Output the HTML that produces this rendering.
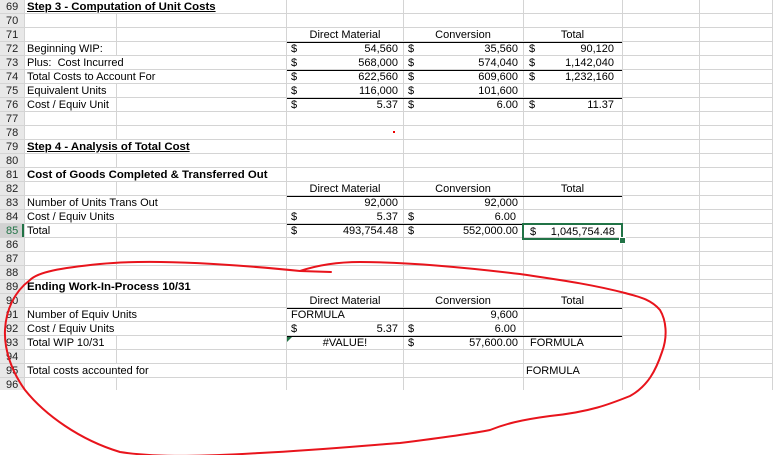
<!DOCTYPE html>
<html><head><meta charset="utf-8"><style>
body{margin:0;width:773px;height:455px;overflow:hidden;background:#fff;font-family:"Liberation Sans",Arial,sans-serif;font-size:11px;color:#000;position:relative}
.t{position:absolute;line-height:14px;white-space:nowrap;height:14px}
.a{background:#fff;height:13px;overflow:visible;padding-right:3px}
.r{text-align:right}
.c{text-align:center}
.b{font-weight:bold;font-size:11.4px}
.u{text-decoration:underline}
.h{position:absolute;left:0;width:24px;height:14px;background:#e8e8e8;line-height:14px;padding-left:6px;box-sizing:border-box;color:#222}
.gl{position:absolute;background:#d4d4d4}
.bl{position:absolute;height:1px;background:#000;left:287px;width:335px}
</style></head><body>
<div id="g"></div>
<script>
var s='';
for(var n=69;n<=96;n++){var y=(n-69)*14;
s+='<div class="h" style="top:'+y+'px;'+(n==85?'background:#d2d2d2;color:#217346;border-right:2px solid #217346;':'')+'">'+n+'</div>';
s+='<div class="gl" style="left:0;top:'+(y+13)+'px;width:773px;height:1px"></div>';}
[24,116,286,403,523,622,699,772].forEach(function(x){s+='<div class="gl" style="left:'+x+'px;top:0;width:1px;height:390px"></div>';});
document.getElementById('g').innerHTML=s;
</script>
<div class="gl" style="left:0;top:390px;width:773px;height:65px;background:#fff"></div>

<div class="t a b u" style="left:27px;top:0">Step 3 - Computation of Unit Costs</div>
<div class="t c" style="left:287px;top:28px;width:116px">Direct Material</div>
<div class="t c" style="left:403px;top:28px;width:120px">Conversion</div>
<div class="t c" style="left:523px;top:28px;width:99px">Total</div>
<div class="bl" style="top:42px"></div>
<div class="t" style="left:27px;top:42px">Beginning WIP:</div>
<div class="t a" style="left:27px;top:56px">Plus:&nbsp; Cost Incurred</div>
<div class="t a" style="left:27px;top:70px">Total Costs to Account For</div>
<div class="t a" style="left:27px;top:84px">Equivalent Units</div>
<div class="t a" style="left:27px;top:98px">Cost / Equiv Unit</div>
<div class="bl" style="top:70px"></div>
<div class="bl" style="top:98px"></div>
<div class="t" style="left:291px;top:42px;line-height:14px">$<br>$<br>$<br>$<br>$</div>
<div class="t" style="left:408px;top:42px;line-height:14px">$<br>$<br>$<br>$<br>$</div>
<div class="t" style="left:529px;top:42px;line-height:14px">$<br>$<br>$</div>
<div class="t" style="left:529px;top:98px">$</div>
<div class="t r" style="left:300px;width:98px;top:42px;line-height:14px;height:70px">54,560<br>568,000<br>622,560<br>116,000<br>5.37</div>
<div class="t r" style="left:420px;width:98px;top:42px;line-height:14px;height:70px">35,560<br>574,040<br>609,600<br>101,600<br>6.00</div>
<div class="t r" style="left:540px;width:74px;top:42px;line-height:14px;height:42px">90,120<br>1,142,040<br>1,232,160</div>
<div class="t r" style="left:540px;width:74px;top:98px">11.37</div>
<div style="position:absolute;left:393px;top:131px;width:2px;height:2px;background:#e00"></div>

<div class="t a b u" style="left:27px;top:140px">Step 4 - Analysis of Total Cost</div>
<div class="t a b" style="left:27px;top:168px">Cost of Goods Completed &amp; Transferred Out</div>
<div class="t c" style="left:287px;top:182px;width:116px">Direct Material</div>
<div class="t c" style="left:403px;top:182px;width:120px">Conversion</div>
<div class="t c" style="left:523px;top:182px;width:99px">Total</div>
<div class="bl" style="top:196px"></div>
<div class="t a" style="left:27px;top:196px">Number of Units Trans Out</div>
<div class="t a" style="left:27px;top:210px">Cost / Equiv Units</div>
<div class="t" style="left:27px;top:224px">Total</div>
<div class="t r" style="left:300px;width:98px;top:196px">92,000</div>
<div class="t r" style="left:420px;width:98px;top:196px">92,000</div>
<div class="t" style="left:291px;top:210px">$</div>
<div class="t r" style="left:300px;width:98px;top:210px">5.37</div>
<div class="t" style="left:408px;top:210px">$</div>
<div class="t r" style="left:420px;width:96px;top:210px">6.00</div>
<div class="bl" style="top:224px"></div>
<div class="t" style="left:291px;top:224px">$</div>
<div class="t r" style="left:300px;width:98px;top:224px">493,754.48</div>
<div class="t" style="left:408px;top:224px">$</div>
<div class="t r" style="left:420px;width:98px;top:224px">552,000.00</div>
<div style="position:absolute;left:522px;top:223px;border:2px solid #217346;box-sizing:border-box;width:101px;height:17px"></div>
<div style="position:absolute;left:619px;top:237px;width:5px;height:5px;background:#217346;border:1px solid #fff"></div>
<div class="t" style="left:530px;top:225px">$</div>
<div class="t r" style="left:540px;width:75px;top:225px">1,045,754.48</div>

<div class="t a b" style="left:27px;top:280px">Ending Work-In-Process 10/31</div>
<div class="t c" style="left:287px;top:294px;width:116px">Direct Material</div>
<div class="t c" style="left:403px;top:294px;width:120px">Conversion</div>
<div class="t c" style="left:523px;top:294px;width:99px">Total</div>
<div class="bl" style="top:308px"></div>
<div class="t a" style="left:27px;top:308px">Number of Equiv Units</div>
<div class="t a" style="left:27px;top:322px">Cost / Equiv Units</div>
<div class="t a" style="left:27px;top:336px">Total WIP 10/31</div>
<div class="t a" style="left:27px;top:364px">Total costs accounted for</div>
<div class="t" style="left:291px;top:308px">FORMULA</div>
<div class="t r" style="left:420px;width:98px;top:308px">9,600</div>
<div class="t" style="left:291px;top:322px">$</div>
<div class="t r" style="left:300px;width:98px;top:322px">5.37</div>
<div class="t" style="left:408px;top:322px">$</div>
<div class="t r" style="left:420px;width:96px;top:322px">6.00</div>
<div class="bl" style="top:336px"></div>
<div style="position:absolute;left:287px;top:337px;width:0;height:0;border-top:5px solid #217346;border-right:5px solid transparent"></div>
<div class="t c" style="left:287px;top:336px;width:116px">#VALUE!</div>
<div class="t" style="left:408px;top:336px">$</div>
<div class="t r" style="left:420px;width:98px;top:336px">57,600.00</div>
<div class="t" style="left:530px;top:336px">FORMULA</div>
<div class="t" style="left:526px;top:364px">FORMULA</div>

<svg style="position:absolute;left:0;top:0" width="773" height="455">
<path d="M300,271 C250,266 160,258 100,264 C60,268 38,272 30,280 C14,292 6,310 5,330 C4,350 12,372 25,390 C45,415 80,440 120,452 C160,458 210,456 260,453 C320,450 360,446 400,443 C440,438 470,434 490,430 C505,424 520,420 550,416 C590,412 610,404 630,396 C648,386 656,370 662,352 C668,336 666,320 660,310 C650,298 635,296 625,293 C590,284 560,280 520,274 C470,268 410,262 360,262 C335,262 315,266 300,271 L331,272" fill="none" stroke="#e8141c" stroke-width="2" stroke-linejoin="round" stroke-linecap="round"/>
</svg>
</body></html>
